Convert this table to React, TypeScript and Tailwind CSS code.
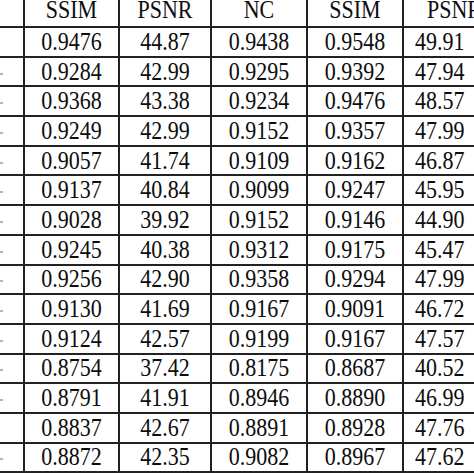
import React from "react";

const rows: string[][] = [
  ["0.9476", "44.87", "0.9438", "0.9548", "49.91"],
  ["0.9284", "42.99", "0.9295", "0.9392", "47.94"],
  ["0.9368", "43.38", "0.9234", "0.9476", "48.57"],
  ["0.9249", "42.99", "0.9152", "0.9357", "47.99"],
  ["0.9057", "41.74", "0.9109", "0.9162", "46.87"],
  ["0.9137", "40.84", "0.9099", "0.9247", "45.95"],
  ["0.9028", "39.92", "0.9152", "0.9146", "44.90"],
  ["0.9245", "40.38", "0.9312", "0.9175", "45.47"],
  ["0.9256", "42.90", "0.9358", "0.9294", "47.99"],
  ["0.9130", "41.69", "0.9167", "0.9091", "46.72"],
  ["0.9124", "42.57", "0.9199", "0.9167", "47.57"],
  ["0.8754", "37.42", "0.8175", "0.8687", "40.52"],
  ["0.8791", "41.91", "0.8946", "0.8890", "46.99"],
  ["0.8837", "42.67", "0.8891", "0.8928", "47.76"],
  ["0.8872", "42.35", "0.9082", "0.8967", "47.62"],
];

const marks = [false, true, true, true, true, true, true, true, true, true, true, true, true, false, true];

function T({ children }: { children: React.ReactNode }) {
  return <span className="inline-block scale-y-110 leading-[20px]">{children}</span>;
}

export default function App() {
  return (
    <div
      className="w-[474px] h-[474px] overflow-hidden bg-white text-[#0d0d0d] text-[22px]"
      style={{ fontFamily: '"Liberation Serif", "Times New Roman", serif' }}
    >
      <div className="flex flex-col w-[520px]">
        <div className="flex h-[28px] border-b-2 border-[#222]">
          <div className="w-[25px] shrink-0 border-r-2 border-[#222]" />
          <div className="w-[95px] shrink-0 border-r-2 border-[#222] flex items-start justify-center"><T>SSIM</T></div>
          <div className="w-[92px] shrink-0 border-r-2 border-[#222] flex items-start justify-center"><T>PSNR</T></div>
          <div className="w-[96px] shrink-0 border-r-2 border-[#222] flex items-start justify-center"><T>NC</T></div>
          <div className="w-[96px] shrink-0 border-r-2 border-[#222] flex items-start justify-center"><T>SSIM</T></div>
          <div className="flex-1 flex items-start pl-[23px]"><T>PSNR</T></div>
        </div>
        {rows.map((r, i) => (
          <div key={i} className="flex h-[29.7px] border-b-2 border-[#222]">
            <div className="w-[25px] shrink-0 border-r-2 border-[#222] flex items-center">
              {marks[i] && <span className="mt-[4px] w-[3px] h-[2px] bg-[#b5b5b5]" />}
            </div>
            <div className="w-[95px] shrink-0 border-r-2 border-[#222] flex items-center justify-center"><T>{r[0]}</T></div>
            <div className="w-[92px] shrink-0 border-r-2 border-[#222] flex items-center justify-center"><T>{r[1]}</T></div>
            <div className="w-[96px] shrink-0 border-r-2 border-[#222] flex items-center justify-center"><T>{r[2]}</T></div>
            <div className="w-[96px] shrink-0 border-r-2 border-[#222] flex items-center justify-center"><T>{r[3]}</T></div>
            <div className="flex-1 flex items-center pl-[11px]"><T>{r[4]}</T></div>
          </div>
        ))}
      </div>
    </div>
  );
}
